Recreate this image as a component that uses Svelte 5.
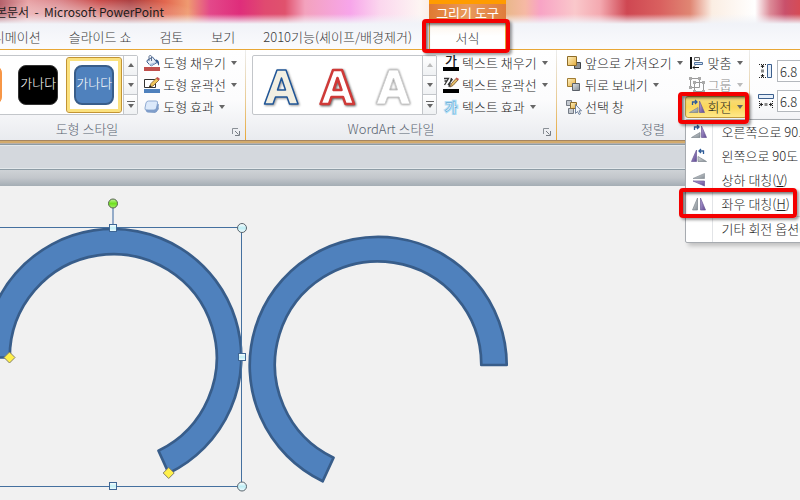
<script lang="ts">
	type Tool = { icon: string; label: string; arrow?: boolean };

	const tabs = ['니메이션', '슬라이드 쇼', '검토', '보기', '2010기능(셰이프/배경제거)'];

	const shapeTools: Tool[] = [
		{ icon: 'bucket', label: '도형 채우기', arrow: true },
		{ icon: 'outline', label: '도형 윤곽선', arrow: true },
		{ icon: 'effect', label: '도형 효과', arrow: true }
	];
	const textTools: Tool[] = [
		{ icon: 'textFill', label: '텍스트 채우기', arrow: true },
		{ icon: 'textOutline', label: '텍스트 윤곽선', arrow: true },
		{ icon: 'textEffect', label: '텍스트 효과', arrow: true }
	];
	const orderTools: Tool[] = [
		{ icon: 'front', label: '앞으로 가져오기', arrow: true },
		{ icon: 'back', label: '뒤로 보내기', arrow: true },
		{ icon: 'pane', label: '선택 창' }
	];

	const rotateMenu = [
		{ icon: 'rotateRight', label: '오른쪽으로 90도 회전', key: 'R' },
		{ icon: 'rotateLeft', label: '왼쪽으로 90도 회전', key: 'L' },
		{ icon: 'flipV', label: '상하 대칭', key: 'V' },
		{ icon: 'flipH', label: '좌우 대칭', key: 'H', marked: true },
		{ icon: '', label: '기타 회전 옵션', key: 'M', separated: true }
	];

	let height = $state('6.8');
	let width = $state('6.8');
	let menuOpen = $state(true);
</script>

{#snippet icon(name: string)}
	<svg class="icon" width="16" height="16" viewBox="0 0 16 16" aria-hidden="true">
		{#if name === 'bucket'}
			<path d="M3 5.500 8.500 2 13 7.500 7 11 3 7z" fill="#e7eef7" stroke="#3f5f8e" />
			<path d="M5 6V1.500C5 .2 7.500.2 7.500 1.500V6" fill="none" stroke="#5a6f8f" />
			<path d="M4 9.500 12.500 7 7.500 11z" fill="#a9bfdd" />
			<path d="M11.500 4.500c3 0 4 2.500 3.500 6-1.500-.5-1-3-3-4z" fill="#31588f" />
			<path d="M0 12h16v4H0z" fill="#c0504d" />
		{:else if name === 'outline'}
			<path d="M.5 2.500h11v8H.5z" fill="#fff" stroke="#333" />
			<path d="M5.500 10 7 6.500 12.500 1l2.500 2-6 6z" fill="#f0c65c" stroke="#7c5a2b" stroke-width=".8" />
			<path d="m12 1.500 1.500-1.500 2.500 2-1.500 1.500z" fill="#c4504d" />
			<path d="M5 10.500 6 8l1.500 1.500z" fill="#222" />
			<path d="M0 12h16v4H0z" fill="#4f81bd" />
		{:else if name === 'effect'}
			<path d="m3 13 8 1 4-4-1-4z" fill="#5f7fae" opacity=".7" />
			<path d="M4.500 2h7.500q2 0 1.500 2l-1 5q-.5 2-2.500 2H2.500Q.5 11 1 9l1-5q.5-2 2.500-2z" fill="#dce9fa" stroke="#91acd3" />
			<path d="M1.500 10.500q5 1 9 .5 2-.5 3-6.500l1.500 1-1.500 6q-.5 2-2.500 2H4q-2 0-2.500-3z" fill="#7f9dca" />
		{:else if name === 'textFill'}
			<text x="8" y="10" text-anchor="middle" font-size="13" font-weight="500" fill="#222">가</text>
			<path d="M0 12h16v4H0z" fill="#000" />
		{:else if name === 'textOutline'}
			<path d="M1 1.500h4.500L1.500 8M1.500 4h3M8.500 1 6 10M9.500 2 5 8" fill="none" stroke="#333" stroke-width="1.300" />
			<path d="m7 10 1.500-3.500L13 1.500l2 1.500-5 5.500z" fill="#e6bd68" stroke="#70522c" stroke-width=".8" />
			<path d="m12.500 1.500 1-1L16 2l-1 1.500z" fill="#c4504d" />
			<path d="M0 12h16v4H0z" fill="#000" />
		{:else if name === 'textEffect'}
			<text x="8" y="13" text-anchor="middle" font-size="13" font-weight="700" fill="#fff" stroke="#b4e0f7" stroke-width="3">가</text>
			<text x="8" y="13" text-anchor="middle" font-size="13" font-weight="700" fill="#f4fbff" stroke="#62a8d4" stroke-width=".6">가</text>
		{:else if name === 'front'}
			<path d="M8.500 7.500h6v6h-6z" fill="#8c9096" stroke="#3f4348" />
			<path d="M1.500 1.500h9v9h-9z" fill="url(#gold)" stroke="#8e6c28" />
		{:else if name === 'back'}
			<path d="M1.500 1.500h8v8h-8z" fill="url(#gold)" stroke="#a07c34" />
			<path d="M6.500 6.500h7v7h-7z" fill="url(#steel)" stroke="#5a6068" />
		{:else if name === 'pane'}
			<path d="M.5 1.500h5v5h-5zM2.500 9.500h5v5h-5z" fill="#c4c9d0" stroke="#747b85" />
			<path d="M4.500 3.500h6v6h-6z" fill="url(#gold)" stroke="#8e6c28" />
			<path d="M9.500 5.500v9l2-2 1.500 3 1.500-.7-1.500-3h2.500z" fill="#f5f8fc" stroke="#566b8a" stroke-width=".8" />
		{:else if name === 'align'}
			<path d="M2 2v12" stroke="#111" stroke-width="2" />
			<path d="M5.500 2.500h5v3h-5z" fill="#f5f5f5" stroke="#666" />
			<path d="M5.500 7.500h8v2h-8z" fill="#d7e5f7" stroke="#52749f" />
			<path d="M4 12.500h6M6 10.500l-2 2 2 2" fill="none" stroke="#111" />
		{:else if name === 'group'}
			<path d="M1.500 1.500h9v9h-9zM5.500 5.500h9v9h-9z" fill="none" stroke="#999" />
			<path d="M0 0h3v3H0zM9 0h3v3H9zM0 9h3v3H0zM4 4h3v3H4zM13 4h3v3h-3zM4 13h3v3H4zM13 13h3v3h-3z" fill="#aaa" />
		{:else if name === 'rotateRight'}
			<path d="M.5 13.500H9V8.500z" fill="url(#steel)" stroke="#7c858d" stroke-width=".7" />
			<path d="M10.500 2v11.500h5z" fill="url(#violet)" stroke="#6c5a96" stroke-width=".7" />
			<path d="M3.500 6V3h4M6 1l2 2-2 2" fill="none" stroke="#2d5b98" stroke-width="1.300" />
		{:else if name === 'rotateLeft'}
			<path d="M5.500 2v11.500h-5z" fill="url(#violet)" stroke="#6c5a96" stroke-width=".7" />
			<path d="M7 13.500h8.500L7 8.500z" fill="url(#steel)" stroke="#7c858d" stroke-width=".7" />
			<path d="M12.500 6V3h-4M10 1 8 3l2 2" fill="none" stroke="#2d5b98" stroke-width="1.300" />
		{:else if name === 'flipV'}
			<path d="M13.500 1.500v5H2z" fill="url(#steel)" stroke="#8b9299" stroke-width=".7" />
			<path d="M2 9h11.500v5z" fill="url(#violet)" stroke="#6c5a96" stroke-width=".7" />
		{:else if name === 'flipH'}
			<path d="M6.500 2v12h-5z" fill="url(#steel)" stroke="#7c858d" stroke-width=".7" />
			<path d="M9.500 2v12h5z" fill="url(#violet)" stroke="#6c5a96" stroke-width=".7" />
		{:else if name === 'height'}
			<path d="M9.500 1.500h4v13h-4z" fill="#e6effa" stroke="#3c5f8d" />
			<path d="M1 1.500h7M1 14.500h7" stroke="#222" stroke-dasharray="1 1" />
			<path d="M4.500 2v3M3 4l1.500-2L6 4M4.500 11v3M3 12l1.500 2L6 12" fill="none" stroke="#222" />
			<path d="M3 6.500h3v3H3z" fill="#888" />
		{:else if name === 'width'}
			<path d="M.5 1.500h15v4H.5z" fill="#e6effa" stroke="#3c5f8d" />
			<path d="M1.500 8v7M14.500 8v7" stroke="#222" stroke-dasharray="1 1" />
			<path d="M2 11.500h3M4 10l-2 1.500L4 13M11 11.500h3M12 10l2 1.500-2 1.500" fill="none" stroke="#222" />
			<path d="M6.500 10h3v3h-3z" fill="#888" />
		{/if}
	</svg>
{/snippet}

{#snippet caret()}
	<svg class="caret" width="6" height="4" viewBox="0 0 6 4" aria-hidden="true"><path d="M0 0h6L3 4z" /></svg>
{/snippet}

{#snippet toolColumn(tools: Tool[])}
	<div class="column">
		{#each tools as tool}
			<button class="tool">
				{@render icon(tool.icon)}
				<span>{tool.label}</span>
				{#if tool.arrow}{@render caret()}{/if}
			</button>
		{/each}
	</div>
{/snippet}

{#snippet scroller(atTop: boolean)}
	<div class="scroller">
		<button aria-label="위로" disabled={atTop}>
			<svg width="6" height="4" viewBox="0 0 6 4"><path d="M0 4h6L3 0z" /></svg>
		</button>
		<button aria-label="아래로">
			<svg width="6" height="4" viewBox="0 0 6 4"><path d="M0 0h6L3 4z" /></svg>
		</button>
		<button aria-label="자세히">
			<svg width="8" height="7" viewBox="0 0 8 7"><path d="M0 0h8v1H0zM1 3h6L4 7z" /></svg>
		</button>
	</div>
{/snippet}

{#snippet launcher()}
	<button class="launcher" aria-label="대화 상자 표시">
		<svg width="8" height="8" viewBox="0 0 8 8">
			<path d="M.5 6V.5H6" fill="none" stroke="#8a9097" />
			<path d="M3 3l3.500 3.500M7.500 3v4.500H3" fill="none" stroke="#777d84" />
		</svg>
	</button>
{/snippet}

<svg class="defs" width="0" height="0" aria-hidden="true">
	<defs>
		<linearGradient id="gold" x1="0" y1="0" x2="1" y2="1">
			<stop offset="0" stop-color="#fff3c4" />
			<stop offset="1" stop-color="#e3ab3c" />
		</linearGradient>
		<linearGradient id="steel" x1="0" y1="0" x2="1" y2="1">
			<stop offset="0" stop-color="#dfe3e6" />
			<stop offset="1" stop-color="#848c93" />
		</linearGradient>
		<linearGradient id="violet" x1="0" y1="0" x2="1" y2="1">
			<stop offset="0" stop-color="#b7a4dc" />
			<stop offset="1" stop-color="#5f4a90" />
		</linearGradient>
		<linearGradient id="handle" x1="0" y1="0" x2="0" y2="1">
			<stop offset="0" stop-color="#fff" />
			<stop offset=".5" stop-color="#bfeef5" />
			<stop offset="1" stop-color="#f2fdff" />
		</linearGradient>
		<linearGradient id="spin" x1="0" y1="0" x2="0" y2="1">
			<stop offset="0" stop-color="#c5f5a0" />
			<stop offset=".5" stop-color="#6fe01f" />
			<stop offset="1" stop-color="#a8f06c" />
		</linearGradient>
	</defs>
</svg>

<div class="window">
	<header>
		<div class="main-head">
			<h1>본문서 &nbsp;- &nbsp;Microsoft PowerPoint</h1>
			<nav>
				{#each tabs as tab}
					<button class="tab">{tab}</button>
				{/each}
			</nav>
		</div>
		<div class="context">
			<div class="context-title">그리기 도구</div>
			<button class="tab active marked">서식</button>
		</div>
	</header>

	<div class="ribbon">
		<section class="group shapes">
			<div class="body">
				<div class="gallery">
					<button class="style"><span class="swatch orange">가나다</span></button>
					<button class="style"><span class="swatch black">가나다</span></button>
					<button class="style selected"><span class="swatch blue">가나다</span></button>
					{@render scroller(false)}
				</div>
				{@render toolColumn(shapeTools)}
			</div>
			<footer><span>도형 스타일</span>{@render launcher()}</footer>
		</section>

		<section class="group wordart">
			<div class="body">
				<div class="gallery">
					{#each ['navy', 'red', 'white'] as look}
						<button class="art" aria-label="WordArt">
							<svg class={look} width="56" height="56" viewBox="0 0 56 56">
								<path d="M24 13h9l12 34h-8.500l-2.500-7H22.500l-2.500 7h-8.500zM28.500 21l-4 12h8z" />
							</svg>
						</button>
					{/each}
					{@render scroller(true)}
				</div>
				{@render toolColumn(textTools)}
			</div>
			<footer><span>WordArt 스타일</span>{@render launcher()}</footer>
		</section>

		<section class="group arrange">
			<div class="body">
				{@render toolColumn(orderTools)}
				<div class="column">
					<button class="tool">{@render icon('align')}<span>맞춤</span>{@render caret()}</button>
					<button class="tool" disabled>{@render icon('group')}<span>그룹</span>{@render caret()}</button>
					<div class="rotate">
						<button class="tool pressed marked" aria-expanded={menuOpen} onclick={() => (menuOpen = !menuOpen)}>
							{@render icon('rotateRight')}<span>회전</span>{@render caret()}
						</button>
						{#if menuOpen}
							<div class="menu" role="menu">
								{#each rotateMenu as item}
									<button class="item" class:marked={item.marked} class:separated={item.separated} role="menuitem">
										<span class="gutter">{#if item.icon}{@render icon(item.icon)}{/if}</span>
										<span class="text">{item.label}(<u>{item.key}</u>)</span>
									</button>
								{/each}
							</div>
						{/if}
					</div>
				</div>
			</div>
			<footer><span>정렬</span></footer>
		</section>

		<section class="group size">
			<label>{@render icon('height')}<input aria-label="높이" bind:value={height} /></label>
			<label>{@render icon('width')}<input aria-label="너비" bind:value={width} /></label>
		</section>
	</div>

	<div class="edge"></div>
	<div class="strip"></div>
	<div class="shade"></div>

	<main>
		<svg class="slide" role="img" aria-label="슬라이드">
			<g class="arc">
				<path d="M-15.700 171.500A128.500 128.500 0 1 1 168.700 287.200L158.500 264.700A103.500 103.500 0 1 0 9.700 171.500Z" />
				<path d="M506.700 179A128.500 128.500 0 1 0 322.700 295.300L333.500 271.700A103.200 103.200 0 1 1 481.300 179Z" />
			</g>
			<path class="frame" d="M-16.500 41.500h258v259h-258z" />
			<path class="stem" d="M113 18v23" />
			<g class="handles">
				<rect x="109.500" y="38.500" width="7" height="7" />
				<rect x="238.500" y="167.500" width="7" height="7" />
				<rect x="109.500" y="296.500" width="7" height="7" />
				<circle cx="242" cy="42" r="4.500" />
				<circle cx="242" cy="300.500" r="4.500" />
			</g>
			<circle class="spin" cx="113" cy="17.500" r="4.500" />
			<path class="adjust" d="M9.500 166l5.500 5.500-5.500 5.500-5.500-5.500zM168.700 281.500l5.500 5.500-5.500 5.500-5.500-5.500z" />
		</svg>
	</main>
</div>

<style>
	:global(body) {
		margin: 0;
	}
	.window {
		display: flex;
		flex-direction: column;
		min-height: 100vh;
		overflow: hidden;
		font: 13px/20px 'Noto Sans CJK KR', sans-serif;
		font-weight: 300;
		color: #1e1e1e;
		background: #f1f1f1;
	}
	.defs {
		position: absolute;
	}
	button,
	input {
		font: inherit;
		color: inherit;
	}
	button {
		padding: 0;
		border: 0;
		background: none;
		white-space: nowrap;
	}

	header {
		display: flex;
		height: 49px;
		border-bottom: 1px solid #e8a736;
		background:
			linear-gradient(to bottom, transparent 14px, #f1f3f8 24px, #fbfbfd 49px),
			radial-gradient(ellipse 110px 16px at 90px 14px, #ffffff80, transparent),
			linear-gradient(
				to right,
				#b5616b 0,
				#e8a3a6 28px,
				#d98288 60px,
				#c63f3d 100px,
				#a93a3c 130px,
				#e2674f 165px,
				#ef9a70 188px,
				#e3488a 210px,
				#df2d7b 240px,
				#e04a70 265px,
				#e0526d 285px,
				#f3a2bd 305px,
				#f7a5ea 350px,
				#fbd7ee 380px,
				#fdf5f3 420px,
				#e9b78a 506px,
				#f6b9a4 525px,
				#f8a3c5 540px,
				#fac8cb 575px,
				#f4a9b0 600px,
				#cf4752 627px,
				#d9605f 660px,
				#e08673 690px,
				#fbeee3 712px,
				#fff 755px,
				#dc8b98 770px,
				#c9506b 785px,
				#d64b55 800px
			);
	}
	.main-head {
		width: 429px;
		overflow: hidden;
	}
	h1 {
		margin: 0 0 0 -4px;
		height: 25px;
		font-size: 12px;
		font-weight: 400;
		line-height: 24px;
		color: #1c1c1c;
		white-space: nowrap;
	}
	nav {
		display: flex;
		justify-content: flex-end;
		padding-right: 3px;
	}
	.tab {
		height: 24px;
		padding: 0 14px;
		color: #3a3a3a;
	}
	.context {
		display: flex;
		flex-direction: column;
		width: 77px;
		height: 49px;
	}
	.context-title {
		height: 22px;
		border-top: 4px solid #ff9c00;
		box-sizing: border-box;
		background: linear-gradient(to right, #e07a32, #e89a5c 50%, #df7d3c);
		color: #fff;
		font-weight: 400;
		text-align: center;
		line-height: 17px;
	}
	.context .tab {
		flex: 1;
		margin-bottom: -1px;
		border: solid #e8a736;
		border-width: 0 1px;
		background: linear-gradient(#fdf3e8, #fff 50%);
		padding-top: 3px;
	}

	/* red callout ring round a control */
	.marked {
		position: relative;
	}
	.marked::after {
		content: '';
		position: absolute;
		z-index: 3;
		inset: -3px -5px -3px -8px;
		border: 4px solid #f40000;
		border-radius: 4px;
		box-shadow:
			2px 2px 3px #0006,
			inset 2px 2px 3px #0008;
		pointer-events: none;
	}

	.ribbon {
		display: flex;
		height: 90px;
		background: linear-gradient(#fff, #fcfcfd 55%, #e9ebef);
	}
	.group {
		display: flex;
		flex-direction: column;
		box-sizing: border-box;
		padding-top: 2px;
		border-right: 1px solid;
		border-image: linear-gradient(#eceef0, #e9c88c 60%, #e8a736) 1;
	}
	.shapes {
		width: 297px;
		margin-left: -51px;
	}
	.wordart {
		width: 311px;
	}
	.arrange {
		width: 193px;
	}
	.body {
		display: flex;
		gap: 6px;
		height: 66px;
	}
	.shapes .body {
		justify-content: flex-end;
		padding-right: 8px;
	}
	.wordart .body {
		padding-left: 6px;
	}
	.arrange .body {
		padding-left: 9px;
	}
	footer {
		display: flex;
		align-items: center;
		height: 22px;
		color: #5a6471;
	}
	footer span {
		flex: 1;
		text-align: center;
	}
	.launcher {
		width: 20px;
		height: 20px;
	}
	.launcher svg {
		display: block;
		margin: 5px 0 0 7px;
	}

	.gallery {
		display: flex;
		box-sizing: border-box;
		height: 60px;
		margin-top: 3px;
		border: 1px solid #c3c6ca;
		border-radius: 2px;
		background: #fff;
	}
	.style {
		flex: none;
		width: 56px;
		height: 56px;
		margin-top: 1px;
		box-sizing: border-box;
		display: grid;
		place-items: center;
	}
	.style.selected {
		border: 1px solid #c29434;
		border-radius: 3px;
		box-shadow: inset 0 0 0 3px #fbe17e;
	}
	.swatch {
		width: 38px;
		height: 38px;
		border-radius: 8px;
		color: #fff;
		line-height: 34px;
		text-align: center;
		border: 1px solid #333;
	}
	.orange {
		background: #f79646;
		border-color: #f79646;
	}
	.black {
		background: #000;
	}
	.blue {
		width: 36px;
		height: 36px;
		background: #4f81bd;
		border: 2px solid #385d8a;
		line-height: 32px;
	}
	.scroller {
		display: flex;
		flex-direction: column;
		width: 14px;
		margin-left: 1px;
	}
	.scroller button {
		flex: 1;
		display: grid;
		place-items: center;
		border-left: 1px solid #c3c6ca;
		background: linear-gradient(#fff, #eff1f3);
		fill: #666;
	}
	.scroller button + button {
		border-top: 1px solid #c3c6ca;
	}
	.scroller button:disabled {
		fill: #bbb;
	}

	.art {
		width: 56px;
	}
	.art svg {
		display: block;
		fill-rule: evenodd;
		stroke-linejoin: round;
	}
	.navy {
		fill: #f2efe2;
		stroke: #1f5597;
		stroke-width: 1.5;
		filter: drop-shadow(1px 1px 1px #0006);
	}
	.red {
		fill: #fff;
		stroke: #cf3a38;
		stroke-width: 2.5;
		filter: drop-shadow(1px 1px 1px #0009);
	}
	.white {
		fill: #fff;
		stroke: #ccc;
		stroke-width: 1;
		filter: drop-shadow(0 0 1px #0008);
	}

	.column {
		display: flex;
		flex-direction: column;
		align-items: flex-start;
	}
	.tool {
		display: flex;
		align-items: center;
		height: 22px;
	}
	.tool span {
		margin: 0 5px 0 3px;
	}
	.icon {
		flex: none;
		display: block;
	}
	.caret {
		fill: #666;
	}
	.tool:disabled {
		color: #8a8a8a;
	}
	.tool:disabled .caret {
		fill: #bbb;
	}
	.rotate {
		position: relative;
	}
	.pressed {
		margin: 0 -4px;
		padding: 0 3px;
		border: 1px solid #c29b3d;
		border-radius: 3px;
		box-sizing: border-box;
		background: linear-gradient(#f6dc82, #fbd75a 50%, #ffe98a);
	}
	.pressed::after {
		inset: -5px -3px -7px -8px;
	}
	.menu {
		position: absolute;
		z-index: 2;
		top: 23px;
		left: -4px;
		width: 192px;
		border: 1px solid #a7abb0;
		border-radius: 2px;
		background: #fff;
		box-shadow: 3px 3px 4px #0003;
	}
	.item {
		display: flex;
		width: 100%;
		height: 24px;
	}
	.gutter {
		display: flex;
		align-items: center;
		width: 21px;
		padding-left: 5px;
		border-right: 1px solid #e2e4e7;
	}
	.text {
		flex: 1;
		padding-left: 9px;
		line-height: 24px;
		text-align: left;
	}
	.item.separated {
		height: 26px;
	}
	.separated .text {
		border-top: 1px solid #dcdfe2;
	}
	.item.marked::after {
		inset: -4px 81px -2px -7px;
	}

	.size {
		flex: 1;
		padding: 10px 0 0 8px;
		gap: 8px;
		border: 0;
		overflow: hidden;
	}
	.size label {
		display: flex;
		align-items: center;
		gap: 3px;
		height: 22px;
	}
	.size input {
		width: 60px;
		height: 22px;
		box-sizing: border-box;
		padding: 0 2px;
		border: 1px solid #b4b8bd;
		background: #fff;
	}

	.edge {
		height: 4px;
		background: linear-gradient(#a58560 1px, #d3ab6c 1px 3px, #b9b0a8 3px);
	}
	.strip {
		height: 24px;
		border: solid #8d9ca5;
		border-width: 1px 0;
		background: #d4d8dd;
		box-shadow:
			inset 0 1px #e3e8eb,
			inset 0 -1px #e3e8eb;
	}
	.shade {
		height: 16px;
		background: linear-gradient(#ced2d6, #c2c6cb 50%, #a4adb4);
	}
	main {
		flex: 1;
		display: flex;
	}
	.slide {
		width: 100%;
		min-height: 314px;
	}
	.arc {
		fill: #4f81bd;
		stroke: #385d8a;
		stroke-width: 2.7;
		stroke-linejoin: round;
	}
	.frame {
		fill: none;
		stroke: #44709f;
	}
	.stem {
		stroke: #94abc8;
		stroke-width: 2;
	}
	.handles {
		fill: url(#handle);
		stroke: #3f6795;
	}
	.handles circle {
		stroke: #59646d;
	}
	.spin {
		fill: url(#spin);
		stroke: #55634e;
	}
	.adjust {
		fill: #fff04a;
		stroke: #85806a;
	}
</style>
